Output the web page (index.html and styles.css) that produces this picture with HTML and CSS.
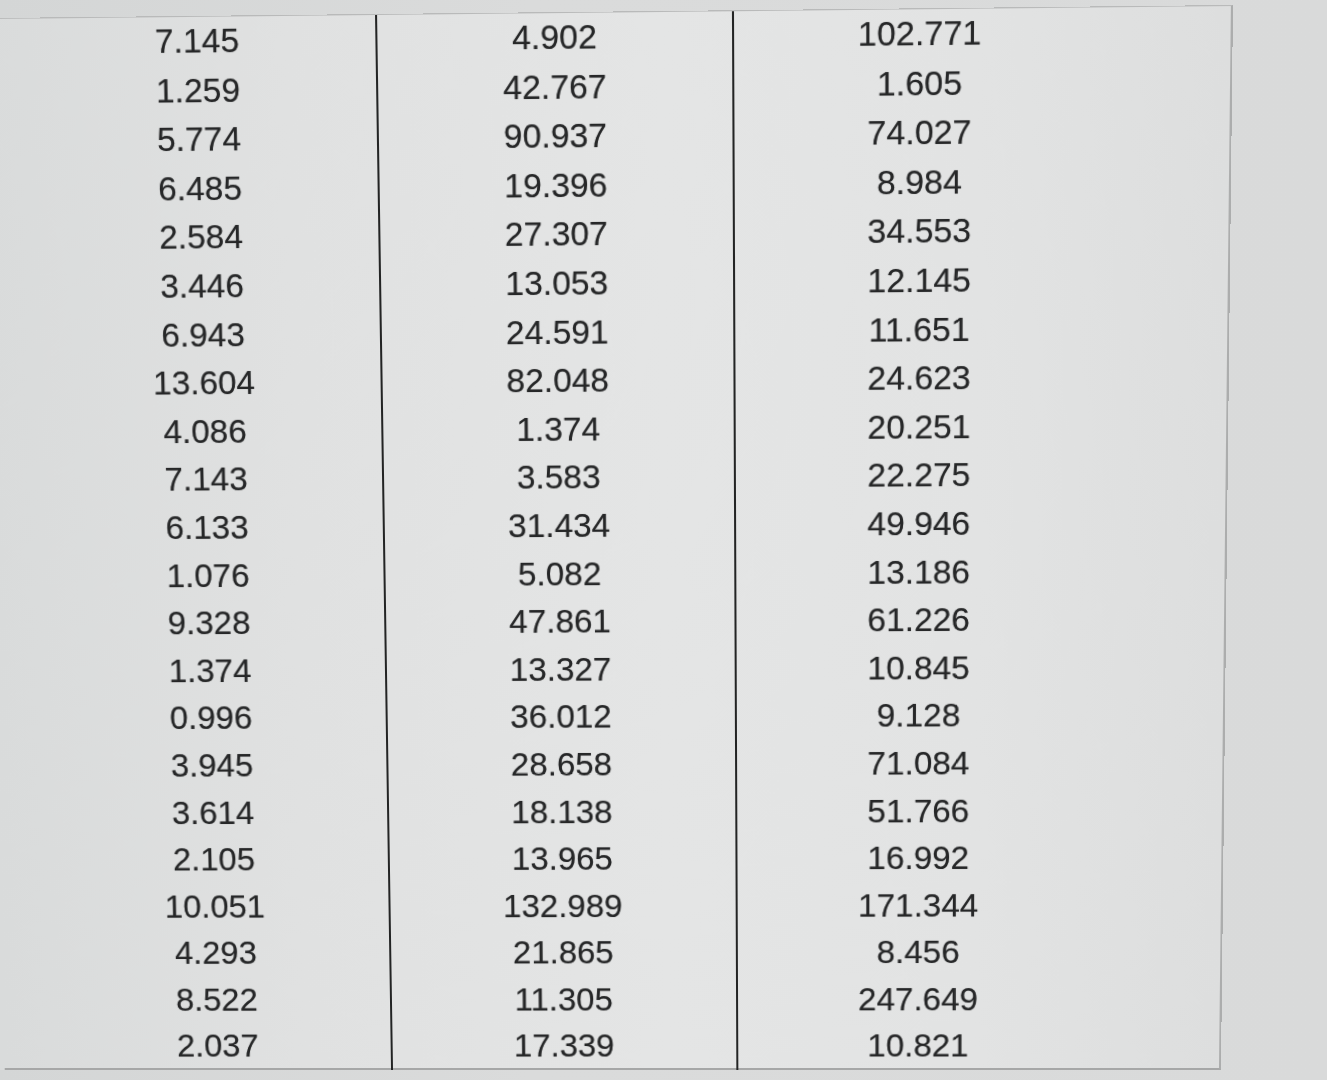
FILE: index.html
```html
<!DOCTYPE html>
<html lang="en">
<head>
<meta charset="utf-8">
<title>Data columns</title>
<link rel="stylesheet" href="styles.css">
</head>
<body>
<div class="sheet">
  <div class="row"><div class="cell c1">7.145</div><div class="cell c2">4.902</div><div class="cell c3">102.771</div><div class="cell c4"></div></div>
  <div class="row"><div class="cell c1">1.259</div><div class="cell c2">42.767</div><div class="cell c3">1.605</div><div class="cell c4"></div></div>
  <div class="row"><div class="cell c1">5.774</div><div class="cell c2">90.937</div><div class="cell c3">74.027</div><div class="cell c4"></div></div>
  <div class="row"><div class="cell c1">6.485</div><div class="cell c2">19.396</div><div class="cell c3">8.984</div><div class="cell c4"></div></div>
  <div class="row"><div class="cell c1">2.584</div><div class="cell c2">27.307</div><div class="cell c3">34.553</div><div class="cell c4"></div></div>
  <div class="row"><div class="cell c1">3.446</div><div class="cell c2">13.053</div><div class="cell c3">12.145</div><div class="cell c4"></div></div>
  <div class="row"><div class="cell c1">6.943</div><div class="cell c2">24.591</div><div class="cell c3">11.651</div><div class="cell c4"></div></div>
  <div class="row"><div class="cell c1">13.604</div><div class="cell c2">82.048</div><div class="cell c3">24.623</div><div class="cell c4"></div></div>
  <div class="row"><div class="cell c1">4.086</div><div class="cell c2">1.374</div><div class="cell c3">20.251</div><div class="cell c4"></div></div>
  <div class="row"><div class="cell c1">7.143</div><div class="cell c2">3.583</div><div class="cell c3">22.275</div><div class="cell c4"></div></div>
  <div class="row"><div class="cell c1">6.133</div><div class="cell c2">31.434</div><div class="cell c3">49.946</div><div class="cell c4"></div></div>
  <div class="row"><div class="cell c1">1.076</div><div class="cell c2">5.082</div><div class="cell c3">13.186</div><div class="cell c4"></div></div>
  <div class="row"><div class="cell c1">9.328</div><div class="cell c2">47.861</div><div class="cell c3">61.226</div><div class="cell c4"></div></div>
  <div class="row"><div class="cell c1">1.374</div><div class="cell c2">13.327</div><div class="cell c3">10.845</div><div class="cell c4"></div></div>
  <div class="row"><div class="cell c1">0.996</div><div class="cell c2">36.012</div><div class="cell c3">9.128</div><div class="cell c4"></div></div>
  <div class="row"><div class="cell c1">3.945</div><div class="cell c2">28.658</div><div class="cell c3">71.084</div><div class="cell c4"></div></div>
  <div class="row"><div class="cell c1">3.614</div><div class="cell c2">18.138</div><div class="cell c3">51.766</div><div class="cell c4"></div></div>
  <div class="row"><div class="cell c1">2.105</div><div class="cell c2">13.965</div><div class="cell c3">16.992</div><div class="cell c4"></div></div>
  <div class="row"><div class="cell c1">10.051</div><div class="cell c2">132.989</div><div class="cell c3">171.344</div><div class="cell c4"></div></div>
  <div class="row"><div class="cell c1">4.293</div><div class="cell c2">21.865</div><div class="cell c3">8.456</div><div class="cell c4"></div></div>
  <div class="row"><div class="cell c1">8.522</div><div class="cell c2">11.305</div><div class="cell c3">247.649</div><div class="cell c4"></div></div>
  <div class="row"><div class="cell c1">2.037</div><div class="cell c2">17.339</div><div class="cell c3">10.821</div><div class="cell c4"></div></div>
</div>
</body>
</html>
```

FILE: styles.css
```css
html, body {
  margin: 0;
  padding: 0;
}

body {
  width: 1327px;
  height: 1080px;
  overflow: hidden;
  background: linear-gradient(90deg, #d4d6d6 0%, #dadbdb 40%, #d9dada 100%);
  font-family: "Liberation Sans", Arial, sans-serif;
}

.sheet {
  box-sizing: border-box;
  width: 1221px;
  height: 1070px;
  border-top: 1px solid #b9baba;
  border-right: 2px solid #acadad;
  border-bottom: 2px solid #a6a7a7;
  background: linear-gradient(90deg, #d9dbdb 0%, #e0e1e1 25%, #e4e5e5 55%, #e2e3e3 80%, #dddede 100%);
  box-shadow: -60px 0 0 0 #d9dbdb;
  display: flex;
  flex-direction: column;
  transform-origin: 0 0;
  transform: matrix3d(1.017101, -0.010851, 0, -0.0000101602,
                      0.027179, 1.016450, 0, 0.0000313469,
                      0, 0, 1, 0,
                      -24.177, 18.1872, 0, 1);
}

.row {
  display: grid;
  grid-template-columns: 393px 347px 359px 1fr;
  height: 48.6px;
  flex: none;
}

.cell {
  box-sizing: border-box;
  font-size: 33px;
  line-height: 48.6px;
  color: #262728;
  text-shadow: 0 0 1px rgba(30, 30, 30, 0.45);
  text-align: center;
  white-space: nowrap;
}

.c1 {
  padding-left: 42px;
  border-right: 2px solid #232424;
}

.c2 {
  border-right: 2px solid #232424;
}
```
